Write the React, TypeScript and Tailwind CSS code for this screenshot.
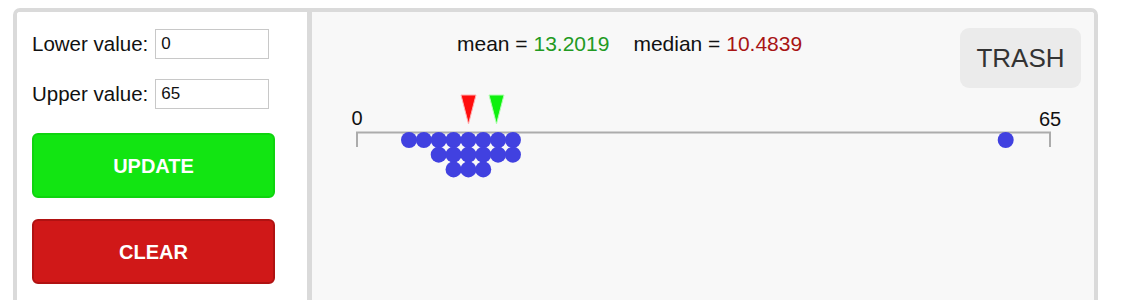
import React from "react";

const SP = 14.85;
const X0 = 97;
const rows: { y: number; idx: number[] }[] = [
  { y: 52, idx: [0, 1, 2, 3, 4, 5, 6, 7] },
  { y: 66.7, idx: [2, 3, 4, 5, 6, 7] },
  { y: 81.4, idx: [3, 4, 5] },
];

function Chart() {
  return (
    <svg width="782" height="212" className="block">
      <path d="M45 59 V44.5 H738 V59" fill="none" stroke="#acacac" strokeWidth="2" />
      <text x="45" y="37" textAnchor="middle" fontSize="20" fill="#111" fontFamily="'Liberation Sans', Arial, sans-serif">0</text>
      <text x="738" y="38" textAnchor="middle" fontSize="20" fill="#111" fontFamily="'Liberation Sans', Arial, sans-serif">65</text>
      <polygon points="149,7 164,7 156.5,36" fill="#ff0d0d" stroke="#ffb3b3" strokeWidth="1" />
      <polygon points="177,7 192,7 184.5,36" fill="#0ef00e" stroke="#b3ffb3" strokeWidth="1" />
      {rows.map((r) =>
        r.idx.map((i) => (
          <circle key={`${r.y}-${i}`} cx={X0 + i * SP} cy={r.y} r="8" fill="#4141e0" />
        ))
      )}
      <circle cx="693.7" cy="52" r="8" fill="#4141e0" />
    </svg>
  );
}

export default function App() {
  return (
    <div className="font-['Liberation_Sans',Arial,sans-serif] bg-white w-[1123px] h-[300px] overflow-hidden pt-[8px] pl-[13px]">
      <div className="flex w-[1085px] h-[320px] border-[4px] border-[#dadada] rounded-[7px] overflow-hidden">
        <div className="w-[295px] shrink-0 bg-white pl-[15px] pt-[17px] flex flex-col border-r-[5px] border-[#dadada]">
          <div className="flex items-center h-[30px] gap-[7px]">
            <span className="text-[20.5px] text-[#111] leading-none">Lower value:</span>
            <div className="w-[114px] h-[30px] border border-[#c8c8c8] bg-white flex items-center pl-[5px] text-[17px] text-[#111]">0</div>
          </div>
          <div className="flex items-center h-[30px] gap-[7px] mt-[20px]">
            <span className="text-[20.5px] text-[#111] leading-none">Upper value:</span>
            <div className="w-[114px] h-[30px] border border-[#c8c8c8] bg-white flex items-center pl-[5px] text-[17px] text-[#111]">65</div>
          </div>
          <button className="mt-[24px] w-[243px] h-[65px] rounded-[6px] bg-[#12e512] border-[2px] border-[#0fd40f] text-white font-bold text-[20px] flex items-center justify-center">
            UPDATE
          </button>
          <button className="mt-[21px] w-[243px] h-[65px] rounded-[6px] bg-[#d01818] border-[2px] border-[#b01212] text-white font-bold text-[20px] flex items-center justify-center">
            CLEAR
          </button>
        </div>
        <div className="w-[782px] shrink-0 bg-[#f8f8f8] flex flex-col">
          <div className="flex items-start justify-between pt-[16px] pr-[13px] h-[76px]">
            <div className="pl-[145px] mt-[4px] text-[21px] leading-[24px] text-[#111] whitespace-pre">
              mean = <span className="text-[#229a22]">13.2019</span>
              <span className="inline-block w-[24px]"></span>
              median = <span className="text-[#a81414]">10.4839</span>
            </div>
            <button className="w-[121px] h-[60px] rounded-[9px] bg-[#ebebeb] text-[26px] text-[#333] flex items-center justify-center">
              TRASH
            </button>
          </div>
          <Chart />
        </div>
      </div>
    </div>
  );
}
